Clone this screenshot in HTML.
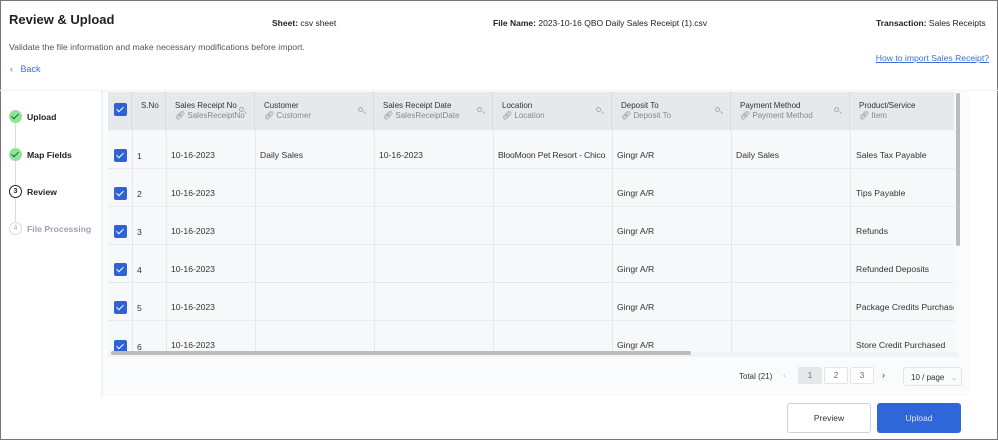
<!DOCTYPE html>
<html><head><meta charset="utf-8"><style>
*{box-sizing:border-box;margin:0;padding:0}
body{width:998px;height:440px;overflow:hidden;background:#fff;font-family:"Liberation Sans",sans-serif;color:#222;position:relative}
.frame{position:absolute;left:0;top:0;width:998px;height:440px;border:1px solid #777}
.a{position:absolute;white-space:nowrap}
.cb{position:absolute;width:13px;height:13px;background:#2f62d6;border-radius:2px}
.cb:after{content:"";position:absolute;left:4px;top:2px;width:3px;height:6px;border:solid #fff;border-width:0 1.5px 1.5px 0;transform:rotate(45deg)}
.hd{position:absolute;top:92px;height:38px;background:#e6e9ec;border-right:1px solid #d8dbdf}
.hd b{position:absolute;left:9px;top:9px;font-size:8px;font-weight:normal;color:#333}
.hd i{position:absolute;left:9px;top:19px;font-size:8px;font-style:normal;color:#888}
.hd s{position:absolute;right:10px;top:15px;width:5px;height:5px;border:1px solid #aaa;border-radius:50%}
.hd s:after{content:"";position:absolute;left:4px;top:4px;width:3px;height:1px;background:#aaa;transform:rotate(45deg)}
.vl{position:absolute;top:130px;height:222px;width:1px;background:#e6e8eb}
.hl{position:absolute;left:108px;width:846px;height:1px;background:#e9ebee}
.t{position:absolute;font-size:8.6px;color:#333;white-space:nowrap}
.step{position:absolute;left:9px;width:13px;height:13px;border-radius:50%}
.ok{background:#8de39a}
.ok:after{content:"";position:absolute;left:4px;top:2px;width:3px;height:6px;border:solid #1a6b2a;border-width:0 1.3px 1.3px 0;transform:rotate(45deg)}
.pg{position:absolute;top:367px;width:24px;height:17px;border:1px solid #e3e5e8;border-radius:2px;font-size:8px;color:#666;text-align:center;line-height:15px;background:#fff}
</style></head><body>
<div class="frame"></div>
<div class="a" style="left:9px;top:12px;font-size:13px;font-weight:bold">Review &amp; Upload</div>
<div class="a" style="left:272px;top:18px;font-size:8.5px"><b>Sheet:</b> csv sheet</div>
<div class="a" style="left:493px;top:18px;font-size:8.5px"><b>File Name:</b> 2023-10-16 QBO Daily Sales Receipt (1).csv</div>
<div class="a" style="left:876px;top:18px;font-size:8.5px"><b>Transaction:</b> Sales Receipts</div>
<div class="a" style="left:9px;top:42px;font-size:8.7px;color:#555">Validate the file information and make necessary modifications before import.</div>
<div class="a" style="left:10px;top:64px;font-size:9px;color:#3a6fd8">&lsaquo;&nbsp;&nbsp;&nbsp;Back</div>
<div class="a" style="right:9px;top:53px;font-size:8.6px;color:#3a6fd8;text-decoration:underline">How to import Sales Receipt?</div>
<div class="a" style="left:0;top:90px;width:998px;height:1px;background:#f3f3f3"></div>
<div class="a" style="left:15px;top:120px;width:1px;height:110px;background:#ddd"></div>
<div class="step ok" style="top:110px"></div><div class="a" style="left:27px;top:112px;font-size:8.7px;font-weight:bold">Upload</div>
<div class="step ok" style="top:148px"></div><div class="a" style="left:27px;top:150px;font-size:8.7px;font-weight:bold">Map Fields</div>
<div class="step" style="top:185px;border:1.3px solid #222;background:#fff;font-size:7px;text-align:center;line-height:11px;font-weight:bold">3</div><div class="a" style="left:27px;top:187px;font-size:8.7px;font-weight:bold">Review</div>
<div class="step" style="top:222px;border:1px solid #ddd;background:#fff;font-size:7px;text-align:center;line-height:11px;color:#aaa">4</div><div class="a" style="left:27px;top:224px;font-size:8.7px;font-weight:bold;color:#9aa3b5">File Processing</div>
<div class="a" style="left:101px;top:91px;width:2px;height:305px;background:#f1f2f4"></div>
<div class="a" style="left:103px;top:91px;width:866px;height:305px;background:#fafbfc"></div>
<div class="a" style="left:108px;top:92px;width:848px;height:262px;background:#f7f8f9"></div>
<div class="hd" style="left:108px;width:24px"></div><div class="cb" style="left:114px;top:103px"></div>
<div class="hd" style="left:132px;width:34px"><b style="top:9px">S.No</b></div>
<div class="hd" style="left:166px;width:89px"><b>Sales Receipt No</b><i>&#x1F517;&#xFE0E; SalesReceiptNo</i><s></s></div>
<div class="hd" style="left:255px;width:119px"><b>Customer</b><i>&#x1F517;&#xFE0E; Customer</i><s></s></div>
<div class="hd" style="left:374px;width:119px"><b>Sales Receipt Date</b><i>&#x1F517;&#xFE0E; SalesReceiptDate</i><s></s></div>
<div class="hd" style="left:493px;width:119px"><b>Location</b><i>&#x1F517;&#xFE0E; Location</i><s></s></div>
<div class="hd" style="left:612px;width:119px"><b>Deposit To</b><i>&#x1F517;&#xFE0E; Deposit To</i><s></s></div>
<div class="hd" style="left:731px;width:119px"><b>Payment Method</b><i>&#x1F517;&#xFE0E; Payment Method</i><s></s></div>
<div class="hd" style="left:850px;width:104px;border:none"><b>Product/Service</b><i>&#x1F517;&#xFE0E; Item</i></div>
<div class="vl" style="left:132px"></div><div class="vl" style="left:166px"></div><div class="vl" style="left:255px"></div><div class="vl" style="left:374px"></div><div class="vl" style="left:493px"></div><div class="vl" style="left:612px"></div><div class="vl" style="left:731px"></div><div class="vl" style="left:850px"></div>
<div class="hl" style="top:168px"></div><div class="hl" style="top:206px"></div><div class="hl" style="top:244px"></div><div class="hl" style="top:282px"></div><div class="hl" style="top:320px"></div>
<div style="position:absolute;left:0;top:0;width:954px;height:352px;overflow:hidden">
<div class="cb" style="left:114px;top:149px"></div><div class="t" style="left:137px;top:151px">1</div><div class="t" style="left:171px;top:150px">10-16-2023</div><div class="t" style="left:260px;top:150px">Daily Sales</div><div class="t" style="left:379px;top:150px">10-16-2023</div><div class="t" style="left:498px;top:150px;letter-spacing:-0.15px">BlooMoon Pet Resort - Chico</div><div class="t" style="left:617px;top:150px">Gingr A/R</div><div class="t" style="left:736px;top:150px">Daily Sales</div><div class="t" style="left:856px;top:150px">Sales Tax Payable</div>
<div class="cb" style="left:114px;top:187px"></div><div class="t" style="left:137px;top:189px">2</div><div class="t" style="left:171px;top:188px">10-16-2023</div><div class="t" style="left:617px;top:188px">Gingr A/R</div><div class="t" style="left:856px;top:188px">Tips Payable</div>
<div class="cb" style="left:114px;top:225px"></div><div class="t" style="left:137px;top:227px">3</div><div class="t" style="left:171px;top:226px">10-16-2023</div><div class="t" style="left:617px;top:226px">Gingr A/R</div><div class="t" style="left:856px;top:226px">Refunds</div>
<div class="cb" style="left:114px;top:263px"></div><div class="t" style="left:137px;top:265px">4</div><div class="t" style="left:171px;top:264px">10-16-2023</div><div class="t" style="left:617px;top:264px">Gingr A/R</div><div class="t" style="left:856px;top:264px">Refunded Deposits</div>
<div class="cb" style="left:114px;top:301px"></div><div class="t" style="left:137px;top:303px">5</div><div class="t" style="left:171px;top:302px">10-16-2023</div><div class="t" style="left:617px;top:302px">Gingr A/R</div><div class="t" style="left:856px;top:302px">Package Credits Purchase</div>
<div class="cb" style="left:114px;top:340px"></div><div class="t" style="left:137px;top:342px">6</div><div class="t" style="left:171px;top:340px">10-16-2023</div><div class="t" style="left:617px;top:340px">Gingr A/R</div><div class="t" style="left:856px;top:340px">Store Credit Purchased</div>
</div>
<div class="a" style="left:108px;top:352px;width:850px;height:5px;background:#f1f2f3"></div>
<div class="a" style="left:111px;top:351px;width:580px;height:4px;background:#bcbcbc;border-radius:2px"></div>
<div class="a" style="left:956px;top:93px;width:4px;height:153px;background:#bcbcbc;border-radius:2px"></div>
<div class="a" style="left:739px;top:372px;font-size:8px;color:#333">Total (21)</div>
<div class="a" style="left:783px;top:370px;font-size:9px;color:#ccc">&lsaquo;</div>
<div class="pg" style="left:798px;background:#e6e9ec">1</div>
<div class="pg" style="left:824px">2</div>
<div class="pg" style="left:850px">3</div>
<div class="a" style="left:882px;top:370px;font-size:9px;color:#444">&rsaquo;</div>
<div class="a" style="left:903px;top:367px;width:59px;height:19px;border:1px solid #e3e5e8;border-radius:3px;font-size:8px;color:#333;padding:5px 0 0 7px">10 / page <span style="color:#bbb;margin-left:4px">&#8964;</span></div>
<div class="a" style="left:787px;top:403px;width:84px;height:30px;border:1px solid #cfd3d8;border-radius:3px;font-size:8.5px;text-align:center;line-height:28px;color:#333">Preview</div>
<div class="a" style="left:877px;top:403px;width:84px;height:30px;background:#2f66d8;border-radius:3px;font-size:8.5px;text-align:center;line-height:30px;color:#dfe7fb">Upload</div>
</body></html>
